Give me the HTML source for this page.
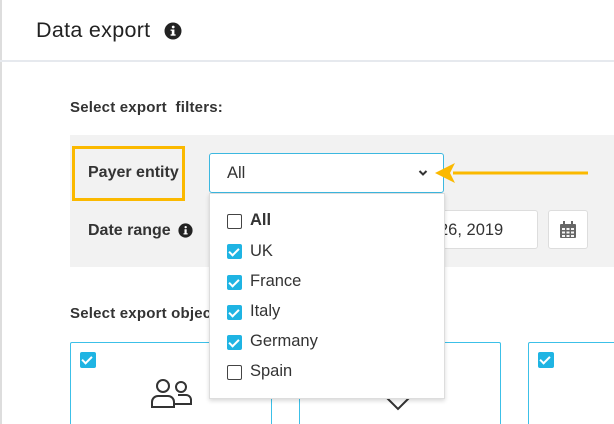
<!DOCTYPE html>
<html><head><meta charset="utf-8"><style>
*{box-sizing:border-box;margin:0;padding:0}
html,body{width:614px;height:424px;overflow:hidden}
body{background:#fff;font-family:"Liberation Sans",sans-serif;color:#2b2b2b;position:relative}
.a{position:absolute}
.cb{position:absolute;width:15px;height:15px;border-radius:2px}
.on{background:#1fb4e3}
.on::after{content:"";position:absolute;left:4px;top:1.5px;width:4px;height:8px;border:solid #fff;border-width:0 2px 2px 0;transform:rotate(45deg)}
.off{border:1.6px solid #444;background:#fff}
.it{position:absolute;left:250px;font-size:16.5px;color:#333}
</style></head><body>
<div class="a" style="left:0;top:0;width:2px;height:424px;background:#ddd"></div>
<div class="a" style="left:36px;top:18px;font-size:21.5px;letter-spacing:0.3px;color:#222">Data export</div>
<svg class="a" style="left:164px;top:22px" width="18" height="18" viewBox="0 0 18 18"><circle cx="9" cy="9" r="8.5" fill="#222"/><rect x="7.8" y="7.5" width="2.6" height="6" fill="#fff"/><rect x="6.6" y="12.3" width="5" height="1.4" fill="#fff"/><rect x="6.6" y="7.5" width="2" height="1.3" fill="#fff"/><circle cx="9.2" cy="5" r="1.4" fill="#fff"/></svg>
<div class="a" style="left:0;top:60px;width:614px;height:2px;background:#e6e9ee"></div>
<div class="a" style="left:70px;top:99px;font-size:15px;letter-spacing:0.2px;font-weight:bold;color:#333">Select export&nbsp; filters:</div>
<div class="a" style="left:70px;top:135px;width:544px;height:132px;background:#f2f2f2"></div>
<div class="a" style="left:72px;top:146px;width:113px;height:55px;border:3px solid #fbb900"></div>
<div class="a" style="left:88px;top:164px;font-size:16px;font-weight:bold;color:#333">Payer entity</div>
<div class="a" style="left:209px;top:153px;width:235px;height:40px;background:#fff;border:1px solid #3cb8e0;border-radius:3px"></div>
<div class="a" style="left:227px;top:164px;font-size:16.5px;color:#333">All</div>
<svg class="a" style="left:418px;top:169px" width="10" height="8"><path d="M1.5 2 L5 5.5 L8.5 2" stroke="#333" stroke-width="2" fill="none"/></svg>
<svg class="a" style="left:433px;top:160px" width="160" height="28"><path d="M20 13 H155" stroke="#fbb900" stroke-width="3"/><path d="M2 13 L22 3 L17 13 L22 23 Z" fill="#fbb900"/></svg>
<div class="a" style="left:88px;top:222px;font-size:16px;font-weight:bold;color:#333">Date range</div>
<svg class="a" style="left:178px;top:223px" width="15" height="15" viewBox="0 0 18 18"><circle cx="9" cy="9" r="8.5" fill="#222"/><rect x="7.8" y="7.5" width="2.6" height="6" fill="#fff"/><rect x="6.6" y="12.3" width="5" height="1.4" fill="#fff"/><circle cx="9.2" cy="5" r="1.4" fill="#fff"/></svg>
<div class="a" style="left:400px;top:210px;width:138px;height:39px;background:#fff;border:1px solid #ddd;border-radius:3px"></div>
<div class="a" style="left:439px;top:221px;font-size:16.5px;color:#333">26, 2019</div>
<div class="a" style="left:548px;top:210px;width:40px;height:39px;background:#fff;border:1px solid #ddd;border-radius:3px"></div>
<svg class="a" style="left:560px;top:221px" width="16" height="17" viewBox="0 0 16 17"><rect x="0" y="3" width="16" height="14" rx="1" fill="#666"/><rect x="3" y="0" width="2" height="4" fill="#666"/><rect x="11" y="0" width="2" height="4" fill="#666"/><g fill="#f5f5f5"><rect x="2" y="7" width="3" height="2"/><rect x="6.5" y="7" width="3" height="2"/><rect x="11" y="7" width="3" height="2"/><rect x="2" y="10.5" width="3" height="2"/><rect x="6.5" y="10.5" width="3" height="2"/><rect x="11" y="10.5" width="3" height="2"/><rect x="2" y="14" width="3" height="2"/><rect x="6.5" y="14" width="3" height="2"/><rect x="11" y="14" width="3" height="2"/></g></svg>
<div class="a" style="left:70px;top:305px;font-size:15px;letter-spacing:0.2px;font-weight:bold;color:#333">Select export objects:</div>
<div class="a" style="left:70px;top:342px;width:202px;height:100px;border:1.5px solid #3cc0e8;border-radius:2px"></div>
<div class="a" style="left:299px;top:342px;width:202px;height:100px;border:1.5px solid #3cc0e8;border-radius:2px"></div>
<div class="a" style="left:528px;top:342px;width:100px;height:100px;border:1.5px solid #3cc0e8;border-radius:2px"></div>
<div class="cb on" style="left:80px;top:352px;width:16px;height:16px"></div>
<div class="cb on" style="left:538px;top:352px;width:16px;height:16px"></div>
<svg class="a" style="left:149px;top:378px" width="46" height="32" viewBox="0 0 46 32"><g stroke="#333" stroke-width="2" fill="none"><circle cx="14" cy="8" r="6"/><path d="M3 29 V24 a6 6 0 0 1 6-6 H19 a6 6 0 0 1 6 6 V29 Z"/><circle cx="32" cy="9" r="5"/><path d="M29 17 H37 a5 5 0 0 1 5 5 V26 H26"/></g></svg>
<svg class="a" style="left:384px;top:395px" width="30" height="20"><path d="M3 3 L14 14 L25 3" stroke="#333" stroke-width="2" fill="none"/></svg>
<div class="a" style="left:209px;top:193px;width:236px;height:206px;background:#fff;border:1px solid #ddd;box-shadow:0 2px 4px rgba(0,0,0,.15)"></div>
<div class="cb off" style="left:227px;top:214px"></div><div class="it" style="top:211px;font-weight:bold">All</div>
<div class="cb on" style="left:227px;top:244px"></div><div class="it" style="top:242px">UK</div>
<div class="cb on" style="left:227px;top:275px"></div><div class="it" style="top:272px">France</div>
<div class="cb on" style="left:227px;top:305px"></div><div class="it" style="top:302px">Italy</div>
<div class="cb on" style="left:227px;top:335px"></div><div class="it" style="top:332px">Germany</div>
<div class="cb off" style="left:227px;top:365px"></div><div class="it" style="top:362px">Spain</div>
</body></html>
